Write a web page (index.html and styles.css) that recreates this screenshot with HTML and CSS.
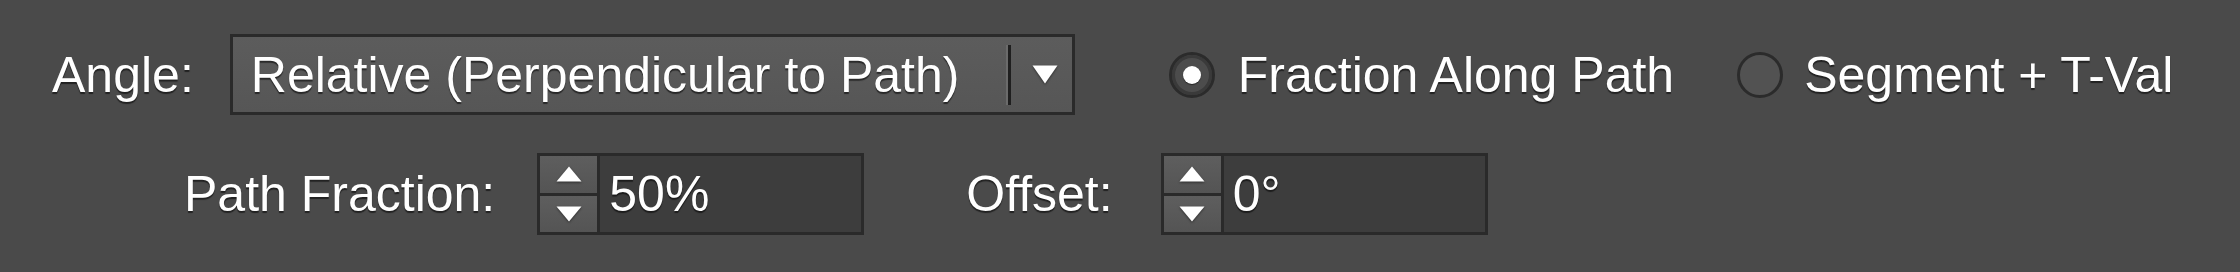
FILE: index.html
```html
<!DOCTYPE html>
<html lang="en">
<head>
<meta charset="utf-8">
<title>Path Placement</title>
<link rel="stylesheet" href="styles.css">
</head>
<body>
<div class="panel">
  <div class="row row-top">
    <span class="label label-angle">Angle:</span>
    <div class="select">
      <span class="select-value">Relative (Perpendicular to Path)</span>
      <span class="select-sep"></span>
      <svg class="select-arrow" width="26" height="19" viewBox="0 0 26 19"><path d="M0.5 0.5 H25.5 L13 18.5 Z" fill="#fff"/></svg>
    </div>
    <label class="radio radio-first">
      <span class="radio-circle radio-checked"><span class="radio-dot"></span></span>
      <span class="radio-text">Fraction Along Path</span>
    </label>
    <label class="radio radio-second">
      <span class="radio-circle"></span>
      <span class="radio-text">Segment + T-Val</span>
    </label>
  </div>
  <div class="row row-bottom">
    <span class="label label-fraction">Path Fraction:</span>
    <div class="stepper">
      <div class="stepper-btns">
        <span class="stepper-btn"><svg width="26" height="16" viewBox="0 0 26 16"><path d="M13 0.5 L25.5 15.5 H0.5 Z" fill="#fff"/></svg></span>
        <span class="stepper-btn"><svg width="26" height="16" viewBox="0 0 26 16"><path d="M0.5 0.5 H25.5 L13 15.5 Z" fill="#fff"/></svg></span>
      </div>
      <div class="stepper-field">50%</div>
    </div>
    <span class="label label-offset">Offset:</span>
    <div class="stepper stepper-offset">
      <div class="stepper-btns">
        <span class="stepper-btn"><svg width="26" height="16" viewBox="0 0 26 16"><path d="M13 0.5 L25.5 15.5 H0.5 Z" fill="#fff"/></svg></span>
        <span class="stepper-btn"><svg width="26" height="16" viewBox="0 0 26 16"><path d="M0.5 0.5 H25.5 L13 15.5 Z" fill="#fff"/></svg></span>
      </div>
      <div class="stepper-field">0°</div>
    </div>
  </div>
</div>
</body>
</html>
```
FILE: styles.css
```css
html, body {
  margin: 0;
  padding: 0;
  background: #4a4a4a;
}
body {
  width: 2240px;
  height: 272px;
  overflow: hidden;
  font-family: "Liberation Sans", Arial, sans-serif;
  font-size: 50px;
  color: #fff;
}
.panel {
  padding-top: 34px;
  display: flex;
  flex-direction: column;
  gap: 38px;
}
.row {
  display: flex;
  align-items: center;
  height: 81px;
}
.label, .select-value, .radio-text, .stepper-field {
  text-shadow: 0 2px 1px rgba(0, 0, 0, 0.55);
  white-space: nowrap;
  line-height: 1;
}
.label-angle {
  margin-left: 52px;
}
.select {
  margin-left: 36px;
  box-sizing: border-box;
  width: 845px;
  height: 81px;
  border: 3px solid #2a2a2a;
  background: linear-gradient(#5c5c5c, #565656);
  display: flex;
  align-items: center;
  padding-left: 18px;
  padding-right: 14px;
}
.select-value {
  flex: 1;
}
.select-sep {
  width: 3px;
  height: 60px;
  background: #1f1f1f;
  border-left: 2px solid #6b6b6b;
  margin-right: 21px;
}
.select-arrow {
  display: block;
  filter: drop-shadow(0 1px 1px rgba(0, 0, 0, 0.5));
}
.radio {
  display: flex;
  align-items: center;
}
.radio-first {
  margin-left: 94px;
}
.radio-second {
  margin-left: 63px;
}
.radio-circle {
  box-sizing: border-box;
  width: 46px;
  height: 46px;
  border-radius: 50%;
  border: 3px solid #2b2b2b;
  background: #525252;
  display: flex;
  align-items: center;
  justify-content: center;
}
.radio-checked {
  background: #4c4c4c;
  box-shadow: inset 0 0 0 3px #3a3a3a;
}
.radio-dot {
  width: 18px;
  height: 18px;
  border-radius: 50%;
  background: #fff;
  box-shadow: 0 1px 1px rgba(0, 0, 0, 0.5);
}
.radio-first .radio-text {
  margin-left: 23px;
}
.radio-second .radio-text {
  margin-left: 21px;
}
.row-bottom {
  height: 82px;
}
.label-fraction {
  margin-left: 184px;
}
.label-offset {
  margin-left: 102px;
}
.stepper {
  margin-left: 42px;
  box-sizing: border-box;
  width: 327px;
  height: 82px;
  background: #2a2a2a;
  padding: 3px;
  display: flex;
  gap: 3px;
}
.stepper-offset {
  margin-left: 48px;
}
.stepper-btns {
  width: 57px;
  display: flex;
  flex-direction: column;
  gap: 3px;
}
.stepper-btn {
  flex: 1;
  background: linear-gradient(#5e5e5e, #545454);
  display: flex;
  align-items: center;
  justify-content: center;
}
.stepper-btn svg {
  display: block;
  filter: drop-shadow(0 1px 1px rgba(0, 0, 0, 0.5));
}
.stepper-field {
  flex: 1;
  background: #3d3d3d;
  display: flex;
  align-items: center;
  padding-left: 9px;
}
```
